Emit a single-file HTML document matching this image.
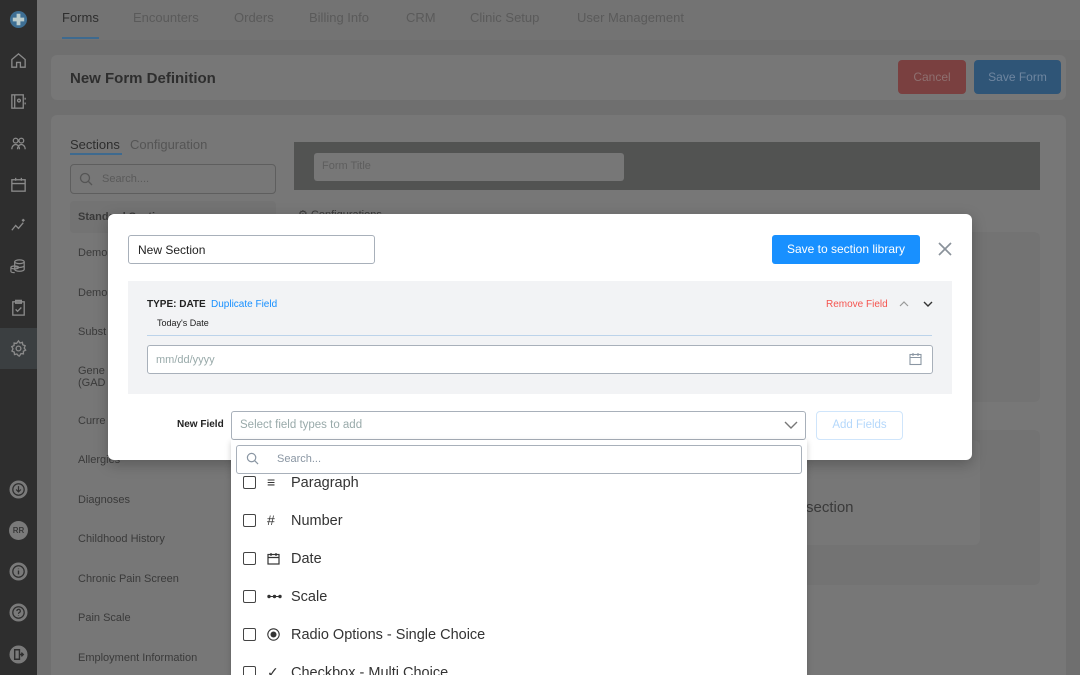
<!DOCTYPE html>
<html style="overflow:hidden;width:1080px;height:675px"><head><style>
*{box-sizing:border-box;margin:0;padding:0}
body{width:1080px;height:675px;overflow:hidden;position:relative;background:#6f6f6f;font-family:"Liberation Sans",sans-serif;color:#333}
.a{position:absolute}
.side{left:0;top:0;width:37px;height:675px;background:#2e2e2e}
.nav{left:37px;top:0;width:1043px;height:40px;background:#737373}
.tab{top:10px;font-size:13px;color:#5a5a5a}
.card{background:#777777;border-radius:6px}
.li{left:78px;font-size:11px;color:#3a3a3a}
.ic{left:9px;width:19px;height:19px}
.it{left:231px;width:575px;height:38px}
.cb{position:absolute;left:12px;top:12px;width:13px;height:13px;border:1.3px solid #444;border-radius:2px}
.lbl{position:absolute;left:60px;top:11px;font-size:14.5px;line-height:17px;color:#333}
.gl{position:absolute;left:36px;top:10px;font-size:14px;color:#333}
</style></head><body>
<div class="a side"></div>
<div class="a" style="left:0;top:328px;width:37px;height:41px;background:#3b3f41"></div>
<svg class="a" style="left:9px;top:10px" width="19" height="19" viewBox="0 0 20 20"><circle cx="10" cy="10" r="9" fill="#3e6f94"/><path d="M8 4h4v4h4v4h-4v4H8v-4H4V8h4z" fill="#bcc"/></svg>
<svg class="a ic" style="top:51px" viewBox="0 0 20 20" fill="none" stroke="#8a8a8a" stroke-width="1.4"><path d="M3 9l7-6 7 6v8h-5v-5H8v5H3z"/></svg>
<svg class="a ic" style="top:92px" viewBox="0 0 20 20" fill="none" stroke="#8a8a8a" stroke-width="1.4"><rect x="3" y="3" width="12" height="14"/><path d="M6 3v14M17 6v2M17 11v2"/><circle cx="10.5" cy="9" r="1.5"/></svg>
<svg class="a ic" style="top:134px" viewBox="0 0 20 20" fill="none" stroke="#8a8a8a" stroke-width="1.3"><circle cx="7" cy="7" r="2.5"/><circle cx="13" cy="7" r="2.5"/><path d="M3 16c0-4 3-5 4-5s4 1 4 5M9 16c0-4 3-5 4-5s4 1 4 5"/></svg>
<svg class="a ic" style="top:175px" viewBox="0 0 20 20" fill="none" stroke="#8a8a8a" stroke-width="1.4"><rect x="3" y="5" width="14" height="12"/><path d="M3 9h14M7 3v3M13 3v3"/></svg>
<svg class="a ic" style="top:216px" viewBox="0 0 20 20" fill="none" stroke="#8a8a8a" stroke-width="1.4"><path d="M3 15l4-5 3 3 5-6"/><path d="M15 3v3M13.5 4.5h3"/></svg>
<svg class="a ic" style="top:257px" viewBox="0 0 20 20" fill="none" stroke="#8a8a8a" stroke-width="1.3"><ellipse cx="11" cy="5" rx="5" ry="2"/><path d="M6 5v4c0 1 2 2 5 2s5-1 5-2V5M6 9v4c0 1 2 2 5 2s5-1 5-2V9"/><ellipse cx="6" cy="11" rx="4" ry="1.5"/><path d="M2 11v4c0 1 2 1.5 4 1.5"/></svg>
<svg class="a ic" style="top:298px" viewBox="0 0 20 20" fill="none" stroke="#8a8a8a" stroke-width="1.4"><rect x="4" y="4" width="12" height="14"/><rect x="7" y="2.5" width="6" height="3"/><path d="M7 12l2 2 4-4"/></svg>
<svg class="a ic" style="top:339px" viewBox="0 0 20 20" fill="none" stroke="#8a8a8a" stroke-width="1.4"><circle cx="10" cy="10" r="2.5"/><path d="M10 2l1.5 2.2 2.6-.7.4 2.6 2.5 1-1 2.4 1.5 2.2-2.4 1.2.1 2.7-2.6-.3L11 18l-1-.3-1.7-1.9-2.5.6-.3-2.6-2.4-1.1 1.1-2.4L2.9 8l2.4-1.1.1-2.7 2.6.4z"/></svg>
<svg class="a ic" style="top:480px" viewBox="0 0 20 20"><circle cx="10" cy="10" r="9.5" fill="#7a7a7a"/><circle cx="10" cy="10" r="6" fill="none" stroke="#2e2e2e" stroke-width="1.3"/><path d="M10 6.5v6M7.5 10l2.5 2.5 2.5-2.5" fill="none" stroke="#2e2e2e" stroke-width="1.3"/></svg>
<div class="a" style="left:9px;top:521px;width:19px;height:19px;border-radius:50%;background:#7a7a7a;color:#3a3a3a;font-size:8px;font-weight:bold;text-align:center;line-height:19px">RR</div>
<svg class="a ic" style="top:562px" viewBox="0 0 20 20"><circle cx="10" cy="10" r="9.5" fill="#7a7a7a"/><circle cx="10" cy="10" r="6" fill="none" stroke="#2e2e2e" stroke-width="1.3"/><path d="M10 9v4M10 7v.5" stroke="#2e2e2e" stroke-width="1.5"/></svg>
<svg class="a ic" style="top:603px" viewBox="0 0 20 20"><circle cx="10" cy="10" r="9.5" fill="#7a7a7a"/><circle cx="10" cy="10" r="6" fill="none" stroke="#2e2e2e" stroke-width="1.3"/><path d="M8.3 8.5a1.8 1.8 0 1 1 2.5 1.6c-.6.3-.8.7-.8 1.3M10 13v.5" fill="none" stroke="#2e2e2e" stroke-width="1.3"/></svg>
<svg class="a ic" style="top:645px" viewBox="0 0 20 20"><circle cx="10" cy="10" r="9.5" fill="#7a7a7a"/><path d="M6 5h5v10H6zM11 10h4M13 8l2 2-2 2" fill="none" stroke="#2e2e2e" stroke-width="1.5"/></svg>

<div class="a nav"></div>
<div class="a tab" style="left:62px;color:#2e2e2e">Forms</div>
<div class="a" style="left:62px;top:37px;width:37px;height:2px;background:#3e6a8f"></div>
<div class="a tab" style="left:133px">Encounters</div>
<div class="a tab" style="left:234px">Orders</div>
<div class="a tab" style="left:309px">Billing Info</div>
<div class="a tab" style="left:406px">CRM</div>
<div class="a tab" style="left:470px">Clinic Setup</div>
<div class="a tab" style="left:577px">User Management</div>

<div class="a card" style="left:51px;top:55px;width:1015px;height:45px"></div>
<div class="a" style="left:70px;top:70px;font-size:15px;font-weight:bold;color:#2e2e2e">New Form Definition</div>
<div class="a" style="left:898px;top:60px;width:68px;height:34px;border-radius:4px;background:#7a4040;color:#8e7070;font-size:12px;text-align:center;line-height:34px">Cancel</div>
<div class="a" style="left:974px;top:60px;width:87px;height:34px;border-radius:4px;background:#2f5577;color:#6f86a0;font-size:12px;text-align:center;line-height:34px">Save Form</div>

<div class="a card" style="left:51px;top:115px;width:1015px;height:560px;border-radius:6px 6px 0 0"></div>
<div class="a" style="left:70px;top:137px;font-size:13px;color:#2e2e2e">Sections</div>
<div class="a" style="left:70px;top:153px;width:52px;height:1.5px;background:#3e6a8f"></div>
<div class="a" style="left:130px;top:137px;font-size:13px;color:#555">Configuration</div>
<div class="a" style="left:70px;top:164px;width:206px;height:30px;border:1px solid #5e5e5e;border-radius:4px"></div>
<svg class="a" style="left:79px;top:172px" width="14" height="14" viewBox="0 0 14 14" fill="none" stroke="#555" stroke-width="1.3"><circle cx="6" cy="6" r="4.5"/><path d="M9.5 9.5l3.5 3.5"/></svg>
<div class="a" style="left:102px;top:173px;font-size:11px;color:#5a5a5a">Search....</div>
<div class="a" style="left:70px;top:201px;width:206px;height:32px;background:#737373;border-radius:4px"></div>
<div class="a li" style="top:211px;font-weight:bold">Standard Sections</div>
<div class="a li" style="top:247px">Demo</div>
<div class="a li" style="top:287px">Demo</div>
<div class="a li" style="top:326px">Subst</div>
<div class="a li" style="top:365px;line-height:12px">Gene<br>(GAD</div>
<div class="a li" style="top:415px">Curre</div>
<div class="a li" style="top:454px">Allergies</div>
<div class="a li" style="top:494px">Diagnoses</div>
<div class="a li" style="top:533px">Childhood History</div>
<div class="a li" style="top:573px">Chronic Pain Screen</div>
<div class="a li" style="top:612px">Pain Scale</div>
<div class="a li" style="top:652px">Employment Information</div>

<div class="a" style="left:294px;top:142px;width:746px;height:48px;background:#525352"></div>
<div class="a" style="left:314px;top:153px;width:310px;height:28px;background:#777;border-radius:3px;font-size:11px;color:#5e5e5e;padding:7px 8px">Form Title</div>
<div class="a" style="left:298px;top:208px;font-size:11px;color:#3a3a3a">⚙ Configurations</div>
<div class="a" style="left:780px;top:232px;width:260px;height:170px;background:#737373;border-radius:6px"></div>
<div class="a" style="left:780px;top:430px;width:260px;height:155px;background:#737373;border-radius:6px"></div>
<div class="a" style="left:790px;top:440px;width:190px;height:105px;background:#777;border-radius:6px"></div>
<div class="a" style="left:806px;top:499px;font-size:15px;color:#3a3a3a">section</div>

<div class="a" style="left:108px;top:214px;width:864px;height:246px;background:#fff;border-radius:6px;box-shadow:0 4px 14px rgba(0,0,0,.25)"></div>
<div class="a" style="left:128px;top:235px;width:247px;height:29px;border:1px solid #a8b0ba;border-radius:3px;font-size:12px;color:#222;padding:7px 9px">New Section</div>
<div class="a" style="left:772px;top:235px;width:148px;height:29px;background:#1890ff;border-radius:3px;color:#fff;font-size:12px;text-align:center;line-height:29px">Save to section library</div>
<svg class="a" style="left:938px;top:242px" width="14" height="14" viewBox="0 0 14 14" stroke="#8a929a" stroke-width="1.7"><path d="M1 1l12 12M13 1L1 13"/></svg>
<div class="a" style="left:128px;top:281px;width:824px;height:113px;background:#f2f3f5"></div>
<div class="a" style="left:147px;top:299px;font-size:10px;font-weight:bold;color:#222">TYPE: DATE</div>
<div class="a" style="left:211px;top:299px;font-size:10px;color:#1890ff">Duplicate Field</div>
<div class="a" style="left:157px;top:318px;font-size:9px;color:#222">Today's Date</div>
<div class="a" style="left:147px;top:335px;width:785px;height:1px;background:#bcd3ea"></div>
<div class="a" style="left:826px;top:299px;font-size:10px;color:#f5544f">Remove Field</div>
<svg class="a" style="left:899px;top:300px" width="10" height="8" viewBox="0 0 10 8" fill="none" stroke="#999" stroke-width="1.2"><path d="M1 6l4-4 4 4"/></svg>
<svg class="a" style="left:923px;top:300px" width="10" height="8" viewBox="0 0 10 8" fill="none" stroke="#333" stroke-width="1.4"><path d="M1 2l4 4 4-4"/></svg>
<div class="a" style="left:147px;top:345px;width:786px;height:29px;border:1px solid #a8b0ba;border-radius:3px;background:#fff;font-size:11px;color:#9aa;padding:8px 8px">mm/dd/yyyy</div>
<svg class="a" style="left:909px;top:352px" width="13" height="14" viewBox="0 0 13 14" fill="none" stroke="#8a96a3" stroke-width="1.1"><rect x="1" y="2.5" width="11" height="10"/><path d="M1 5.5h11M4 1v3M9 1v3"/></svg>
<div class="a" style="left:177px;top:419px;font-size:10px;font-weight:bold;color:#222">New Field</div>
<div class="a" style="left:231px;top:411px;width:575px;height:29px;border:1px solid #a8b0ba;border-radius:3px;font-size:11.5px;color:#9aa;padding:7px 8px">Select field types to add</div>
<svg class="a" style="left:784px;top:421px" width="14" height="9" viewBox="0 0 14 9" fill="none" stroke="#777" stroke-width="1.4"><path d="M1 1l6 6 6-6"/></svg>
<div class="a" style="left:816px;top:411px;width:87px;height:29px;border:1px solid #cfe5fb;border-radius:4px;color:#b5d8fb;font-size:11.5px;text-align:center;line-height:27px">Add Fields</div>

<div class="a" style="left:231px;top:440px;width:576px;height:235px;background:#fff;box-shadow:0 2px 6px rgba(0,0,0,.2)"></div>
<div class="a it" style="top:464px"><div class="cb"></div><div class="gl">≡</div><div class="lbl">Paragraph</div></div>
<div class="a" style="left:236px;top:445px;width:566px;height:29px;border:1px solid #a8b0ba;border-radius:3px;background:#fff"></div>
<svg class="a" style="left:246px;top:452px" width="13" height="13" viewBox="0 0 14 14" fill="none" stroke="#8a96a3" stroke-width="1.3"><circle cx="6" cy="6" r="4.5"/><path d="M9.5 9.5l3.5 3.5"/></svg>
<div class="a" style="left:277px;top:453px;font-size:11px;color:#8a96a3">Search...</div>
<div class="a it" style="top:502px"><div class="cb"></div><div class="gl">#</div><div class="lbl">Number</div></div>
<div class="a it" style="top:540px"><div class="cb"></div><svg style="position:absolute;left:36px;top:12px" width="13" height="13" viewBox="0 0 13 13" fill="none" stroke="#333" stroke-width="1.2"><rect x="1" y="2.5" width="11" height="9.5"/><path d="M1 5.5h11M4 1v3M9 1v3"/></svg><div class="lbl">Date</div></div>
<div class="a it" style="top:578px"><div class="cb"></div><svg style="position:absolute;left:36px;top:16px" width="15" height="5" viewBox="0 0 15 5"><circle cx="2" cy="2.5" r="1.7" fill="#333"/><circle cx="7.5" cy="2.5" r="1.7" fill="#333"/><circle cx="13" cy="2.5" r="1.7" fill="#333"/><path d="M2 2.5h11" stroke="#333"/></svg><div class="lbl">Scale</div></div>
<div class="a it" style="top:616px"><div class="cb"></div><svg style="position:absolute;left:36px;top:12px" width="13" height="13" viewBox="0 0 13 13"><circle cx="6.5" cy="6.5" r="5.7" fill="none" stroke="#333" stroke-width="1.1"/><circle cx="6.5" cy="6.5" r="3" fill="#333"/></svg><div class="lbl">Radio Options - Single Choice</div></div>
<div class="a it" style="top:654px"><div class="cb"></div><div class="gl">✓</div><div class="lbl">Checkbox - Multi Choice</div></div>
</body></html>
